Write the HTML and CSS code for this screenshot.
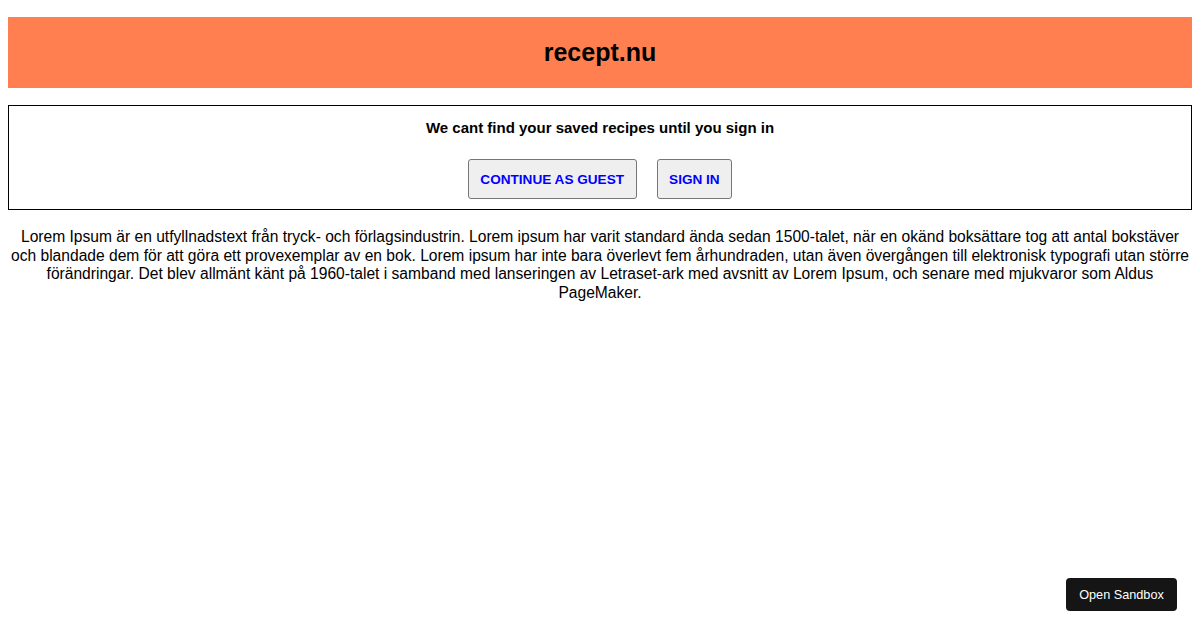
FILE: index.html
```html
<!DOCTYPE html>
<html lang="sv">
<head>
  <meta charset="UTF-8">
  <meta name="viewport" content="width=device-width, initial-scale=1.0">
  <title>recept.nu</title>
  <link rel="stylesheet" href="styles.css">
</head>
<body>
  <header class="header">
    <h1 class="logo">recept.nu</h1>
  </header>
  <div class="signin-box">
    <h3 class="signin-title">We cant find your saved recipes until you sign in</h3>
    <div class="signin-actions">
      <button class="action-btn">Continue as guest</button>
      <button class="action-btn">Sign in</button>
    </div>
  </div>
  <p class="intro">Lorem Ipsum är en utfyllnadstext från tryck- och förlagsindustrin. Lorem ipsum har varit standard ända sedan 1500-talet, när en okänd boksättare tog att antal bokstäver och blandade dem för att göra ett provexemplar av en bok. Lorem ipsum har inte bara överlevt fem århundraden, utan även övergången till elektronisk typografi utan större förändringar. Det blev allmänt känt på 1960-talet i samband med lanseringen av Letraset-ark med avsnitt av Lorem Ipsum, och senare med mjukvaror som Aldus PageMaker.</p>
  <button class="sandbox-btn">Open Sandbox</button>
</body>
</html>
```

FILE: styles.css
```css
body {
  margin: 8px;
  font-family: "Liberation Sans", Arial, sans-serif;
  color: #000;
  background-color: #fff;
}
.header {
  margin-top: 9px;
  height: 71px;
  background-color: #ff7f50;
  display: flex;
  align-items: center;
  justify-content: center;
}
.logo {
  margin: 0;
  font-size: 25px;
  font-weight: bold;
}
.signin-box {
  margin-top: 17px;
  border: 1px solid #000;
  padding: 13px 10px 10px;
  text-align: center;
}
.signin-title {
  margin: 0 0 22px;
  font-size: 15px;
  line-height: 18px;
  font-weight: bold;
}
.signin-actions {
  display: flex;
  justify-content: center;
  gap: 20px;
}
.action-btn {
  height: 40px;
  padding: 0 11.5px;
  background-color: #efefef;
  border: 1px solid #767676;
  border-radius: 3px;
  color: #0000ff;
  font-family: "Liberation Sans", Arial, sans-serif;
  font-size: 13.6px;
  font-weight: bold;
  text-transform: uppercase;
  cursor: pointer;
}
.intro {
  margin: 18px 0;
  font-size: 15.6px;
  line-height: 18.6px;
  text-align: center;
}
.sandbox-btn {
  position: fixed;
  right: 23px;
  bottom: 19px;
  width: 111px;
  height: 33px;
  background-color: #151515;
  color: #fff;
  border: none;
  border-radius: 4px;
  font-family: "Liberation Sans", Arial, sans-serif;
  font-size: 12.7px;
  cursor: pointer;
}
```
